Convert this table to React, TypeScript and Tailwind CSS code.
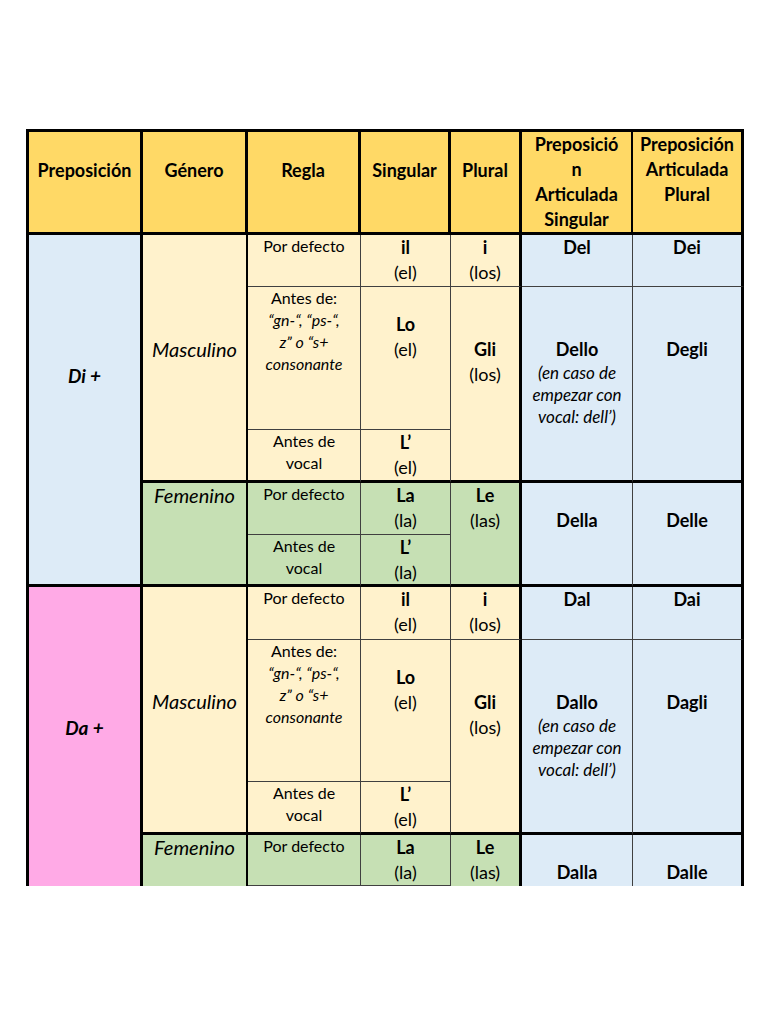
import type { ReactNode } from 'react';

interface CellProps {
  className: string;
  children?: ReactNode;
}

function Cell({ className, children }: CellProps) {
  return <div className={`flex flex-col items-center text-center ${className}`}>{children}</div>;
}

function Art({ word, es }: { word: string; es: string }) {
  return (
    <>
      <span className="font-bold">{word}</span>
      <span>{es}</span>
    </>
  );
}

interface Block {
  label: string;
  labelCls: string;
  sing: [string, string, string];
  plur: [string, string, string];
  cut?: boolean;
}

const blocks: Block[] = [
  {
    label: 'Di +',
    labelCls: 'row-span-5 bg-[#ddebf7] border-r-[3px] border-b-[3px] border-black pt-[128px]',
    sing: ['Del', 'Dello', 'Della'],
    plur: ['Dei', 'Degli', 'Delle'],
  },
  {
    label: 'Da +',
    labelCls: 'row-span-5 bg-[#ffaae6] border-r-[3px] border-b-[3px] border-black pt-[128px]',
    sing: ['Dal', 'Dallo', 'Dalla'],
    plur: ['Dai', 'Dagli', 'Dalle'],
    // the page ends inside this block, so its last row is never seen
    cut: true,
  },
];

const rule = 'text-[16px] leading-[22px]';
const note = 'italic text-[17px] leading-[22px]';

function PrepBlock({ b }: { b: Block }) {
  return (
    <>
      {/* Masculino, por defecto */}
      <Cell className={b.labelCls}>
        <span className="font-bold italic text-[19px]">{b.label}</span>
      </Cell>
      <Cell className="row-span-3 bg-[#fff2cc] border-r-2 border-b-[3px] border-black pt-[102px] italic text-[20px]">
        Masculino
      </Cell>
      <Cell className={`bg-[#fff2cc] border-r border-b border-[#404040] ${rule}`}>Por defecto</Cell>
      <Cell className="bg-[#fff2cc] border-r border-b border-[#404040]">
        <Art word="il" es="(el)" />
      </Cell>
      <Cell className="bg-[#fff2cc] border-r-[3px] border-b border-r-black border-b-[#404040]">
        <Art word="i" es="(los)" />
      </Cell>
      <Cell className="bg-[#ddebf7] border-r border-b border-[#404040] font-bold">{b.sing[0]}</Cell>
      <Cell className="bg-[#ddebf7] border-r-[3px] border-b border-r-black border-b-[#404040] font-bold">
        {b.plur[0]}
      </Cell>

      {/* Antes de gn-, ps-, z, s+consonante */}
      <Cell className={`bg-[#fff2cc] border-r border-b border-[#404040] ${rule}`}>
        <span>Antes de:</span>
        <span className="italic">“gn-“, “ps-“,</span>
        <span className="italic">z” o “s+</span>
        <span className="italic">consonante</span>
      </Cell>
      <Cell className="bg-[#fff2cc] border-r border-b border-[#404040] pt-[25px]">
        <Art word="Lo" es="(el)" />
      </Cell>
      <Cell className="row-span-2 bg-[#fff2cc] border-r-[3px] border-b-[3px] border-black pt-[50px]">
        <Art word="Gli" es="(los)" />
      </Cell>
      <Cell className="row-span-2 bg-[#ddebf7] border-r border-b-[3px] border-r-[#404040] border-b-black pt-[50px]">
        <span className="font-bold">{b.sing[1]}</span>
        <span className={note}>(en caso de</span>
        <span className={note}>empezar con</span>
        <span className={note}>vocal: dell’)</span>
      </Cell>
      <Cell className="row-span-2 bg-[#ddebf7] border-r-[3px] border-b-[3px] border-black pt-[50px] font-bold">
        {b.plur[1]}
      </Cell>

      {/* Antes de vocal */}
      <Cell className={`bg-[#fff2cc] border-r border-b-[3px] border-r-[#404040] border-b-black ${rule}`}>
        <span>Antes de</span>
        <span>vocal</span>
      </Cell>
      <Cell className="bg-[#fff2cc] border-r border-b-[3px] border-r-[#404040] border-b-black">
        <Art word="L’" es="(el)" />
      </Cell>

      {/* Femenino */}
      <Cell className="row-span-2 bg-[#c6e0b4] border-r-2 border-b-[3px] border-black italic text-[20px]">
        Femenino
      </Cell>
      <Cell className={`bg-[#c6e0b4] border-r border-b border-[#404040] ${rule}`}>Por defecto</Cell>
      <Cell className="bg-[#c6e0b4] border-r border-b border-[#404040]">
        <Art word="La" es="(la)" />
      </Cell>
      <Cell className="row-span-2 bg-[#c6e0b4] border-r-[3px] border-b-[3px] border-black">
        <Art word="Le" es="(las)" />
      </Cell>
      <Cell className="row-span-2 bg-[#ddebf7] border-r border-b-[3px] border-r-[#404040] border-b-black pt-[25px] font-bold">
        {b.sing[2]}
      </Cell>
      <Cell className="row-span-2 bg-[#ddebf7] border-r-[3px] border-b-[3px] border-black pt-[25px] font-bold">
        {b.plur[2]}
      </Cell>
      {!b.cut && (
        <>
          <Cell className={`bg-[#c6e0b4] border-r border-b-[3px] border-r-[#404040] border-b-black ${rule}`}>
            <span>Antes de</span>
            <span>vocal</span>
          </Cell>
          <Cell className="bg-[#c6e0b4] border-r border-b-[3px] border-r-[#404040] border-b-black">
            <Art word="L’" es="(la)" />
          </Cell>
        </>
      )}
    </>
  );
}

export default function App() {
  const head = 'bg-[#ffd966] border-b-[3px] border-black font-bold';
  return (
    <div className="w-[768px] h-[1024px] bg-white pt-[129px] pl-[26px] font-['Lato',sans-serif] text-black text-[18px] leading-[25px]">
      <div className="w-[718px] h-[757px] overflow-hidden">
        <div className="grid grid-cols-[114px_105px_113px_90px_71px_111px_111px] grid-rows-[103px_52px_143px_53px_52px_52px_53px_142px_53px_51px_52px] border-l-[3px] border-t-[3px] border-black">
          <Cell className={`${head} border-r-[3px] pt-[26px]`}>Preposición</Cell>
          <Cell className={`${head} border-r-[3px] pt-[26px]`}>Género</Cell>
          <Cell className={`${head} border-r-[3px] pt-[26px]`}>Regla</Cell>
          <Cell className={`${head} border-r-[3px] pt-[26px]`}>Singular</Cell>
          <Cell className={`${head} border-r-[3px] pt-[26px]`}>Plural</Cell>
          <Cell className={`${head} border-r-2`}>
            <span>Preposició</span>
            <span>n</span>
            <span>Articulada</span>
            <span>Singular</span>
          </Cell>
          <Cell className={`${head} border-r-[3px]`}>
            <span>Preposición</span>
            <span>Articulada</span>
            <span>Plural</span>
          </Cell>

          {blocks.map((b) => (
            <PrepBlock key={b.label} b={b} />
          ))}
        </div>
      </div>
    </div>
  );
}
